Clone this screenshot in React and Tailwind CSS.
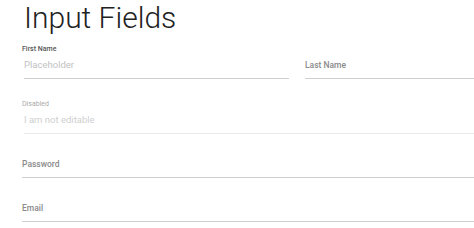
export default function App() {
    return (
        <div className="w-full h-[228px] overflow-hidden bg-white font-['Roboto',sans-serif]">
            <div className="w-[560px] pl-6">

                {/* Title */}
                <h1 className="text-[30px] leading-[35px] font-light text-[#222]">
                    Input Fields
                </h1>

                {/* Row 1 */}
                <div className="grid grid-cols-[265px_265px] gap-x-[18px] mt-[10px]">
                    <div>
                        <label className="block text-[7px] leading-[9px] font-medium text-[#555] -ml-[2px]">
                            First Name
                        </label>
                        <div className="h-[25px] flex items-center text-[9.5px] text-[#c2c2c2] border-b border-[#cfcfcf] pb-[2px]">
                            Placeholder
                        </div>
                    </div>
                    <div className="pt-[9px]">
                        <div className="h-[25px] flex items-center text-[8.5px] font-medium text-[#8a8a8a] -ml-[2px] border-b border-[#cfcfcf] pb-[2px]">
                            Last Name
                        </div>
                    </div>
                </div>

                {/* Disabled */}
                <div className="mt-[21px]">
                    <label className="block text-[7px] leading-[9px] text-[#aaa] -ml-[2px]">
                        Disabled
                    </label>
                    <div className="h-[25px] flex items-center text-[9.5px] text-[#cfcfcf] border-b border-[#ececec] pb-[2px]">
                        I am not editable
                    </div>
                </div>

                {/* Password */}
                <div className="mt-[19px]">
                    <div className="h-[25px] flex items-center text-[8.5px] font-medium text-[#8a8a8a] -ml-[2px] border-b border-[#cfcfcf] pb-[2px]">
                        Password
                    </div>
                </div>

                {/* Email */}
                <div className="mt-[19px]">
                    <div className="h-[25px] flex items-center text-[8.5px] font-medium text-[#8a8a8a] -ml-[2px] border-b border-[#cfcfcf] pb-[2px]">
                        Email
                    </div>
                </div>

            </div>
        </div>
    );
}
